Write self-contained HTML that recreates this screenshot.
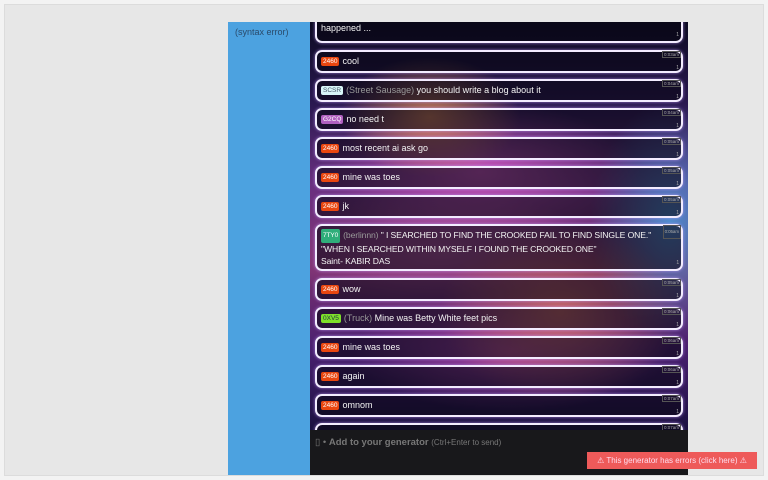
<!DOCTYPE html>
<html><head><meta charset="utf-8"><style>
*{margin:0;padding:0;box-sizing:border-box}
body{width:768px;height:480px;background:#f3f3f3;position:relative;overflow:hidden;font-family:"Liberation Sans",sans-serif}
#panel{position:absolute;left:4px;top:4px;width:760px;height:472px;background:#e7e7e7;border:1px solid #dcdcdc}
#blue{position:absolute;left:228px;top:22px;width:82px;height:453px;background:#4ca2e0;color:#2a4a6a;font-size:9px;padding:5px 7px}
#chat{position:absolute;left:310px;top:22px;width:378px;height:408px;overflow:hidden;
background:
radial-gradient(ellipse 90px 60px at 120px 95px,rgba(255,160,80,.7),transparent),
radial-gradient(ellipse 160px 70px at 170px 150px,rgba(240,100,210,.7),transparent),
radial-gradient(ellipse 120px 90px at 250px 290px,rgba(240,130,90,.65),transparent),
radial-gradient(ellipse 80px 120px at 360px 200px,rgba(60,180,240,.7),transparent),
radial-gradient(ellipse 160px 60px at 200px 330px,rgba(230,90,200,.6),transparent),
radial-gradient(ellipse 160px 60px at 130px 230px,rgba(200,100,170,.65),transparent),
linear-gradient(180deg,#0c0a22 0%,#2a1850 20%,#6a3080 40%,#7a3070 60%,#4a2070 80%,#1a1040 100%)}
.m{position:absolute;left:5px;width:368px;height:23px;border:2px solid #f3ecff;border-radius:7px;background:rgba(8,6,18,.6);color:#f4f4f4;font-size:9px;padding:4px 0 0 4px;box-shadow:0 0 3px rgba(200,160,255,.7)}
.t{position:absolute;right:0;top:-1px;font-size:4.5px;color:#aaa;border:1px solid #555;padding:0 1px}
.n{position:absolute;right:2px;bottom:0;font-size:5px;color:#aaa}
.b{display:inline-block;font-size:6.5px;padding:1px 2px;border-radius:2px;margin-right:3px;color:#fff;vertical-align:1px}
.o{background:#e9460f}.g{color:#999}
#inp{position:absolute;left:310px;top:430px;width:378px;height:45px;background:#18181b;color:#777;font-size:9.5px;padding:7px 5px}
#err{position:absolute;left:587px;top:452px;width:170px;height:17px;background:#ee5a5a;color:#fde;font-size:8px;line-height:17px;text-align:center}
</style></head><body>
<div id="panel"></div>
<div id="blue">(syntax error)</div>
<div id="chat">
<div class="m" style="top:-14px;height:35px;padding-top:0px;line-height:12px">water erosion on ancient megalithic sites around the globe indicating a major flood<br>happened ...<span class="n">1</span></div>
<div class="m" style="top:28px"><span class="b o">2460</span>cool<span class="t">0:03am</span><span class="n">1</span></div>
<div class="m" style="top:57px"><span class="b" style="background:#d8f6f8;color:#456">SCSR</span><span class="g">(Street Sausage)</span> you should write a blog about it<span class="t">0:04am</span><span class="n">1</span></div>
<div class="m" style="top:86px"><span class="b" style="background:#b060c0">G2CQ</span>no need t<span class="t">0:04am</span><span class="n">1</span></div>
<div class="m" style="top:115px"><span class="b o">2460</span>most recent ai ask go<span class="t">0:05am</span><span class="n">1</span></div>
<div class="m" style="top:144px"><span class="b o">2460</span>mine was toes<span class="t">0:05am</span><span class="n">1</span></div>
<div class="m" style="top:173px"><span class="b o">2460</span>jk<span class="t">0:05am</span><span class="n">1</span></div>
<div class="m" style="top:202px;height:47px;line-height:12px;padding-top:3px;font-size:8.6px;letter-spacing:-0.1px"><span class="b" style="background:#2fae7a">7TY0</span><span class="g">(berlinnn)</span> " I SEARCHED TO FIND THE CROOKED FAIL TO FIND SINGLE ONE."<br>"WHEN I SEARCHED WITHIN MYSELF I FOUND THE CROOKED ONE"<br>Saint- KABIR DAS<span class="t">0:05am</span><span class="n">1</span></div>
<div class="m" style="top:256px"><span class="b o">2460</span>wow<span class="t">0:05am</span><span class="n">1</span></div>
<div class="m" style="top:285px"><span class="b" style="background:#7ee02a;color:#234">0XV5</span><span class="g">(Truck)</span> Mine was Betty White feet pics<span class="t">0:06am</span><span class="n">1</span></div>
<div class="m" style="top:314px"><span class="b o">2460</span>mine was toes<span class="t">0:06am</span><span class="n">1</span></div>
<div class="m" style="top:343px"><span class="b o">2460</span>again<span class="t">0:06am</span><span class="n">1</span></div>
<div class="m" style="top:372px"><span class="b o">2460</span>omnom<span class="t">0:07am</span><span class="n">1</span></div>
<div class="m" style="top:401px"><span class="t">0:07am</span></div>
</div>
<div id="inp">▯ • <b>Add to your generator</b> <span style="font-size:8px">(Ctrl+Enter to send)</span></div>
<div id="err">⚠ This generator has errors (click here) ⚠</div>
</body></html>
